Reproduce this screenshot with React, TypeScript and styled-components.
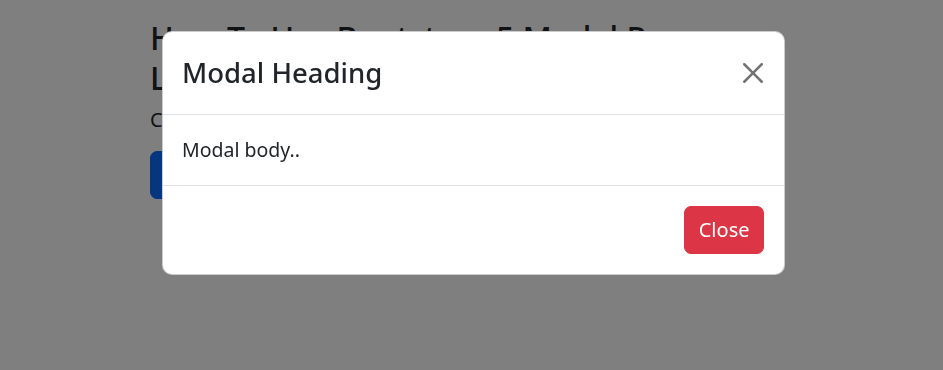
import React from 'react';
import styled, { createGlobalStyle } from 'styled-components';

const GlobalStyle = createGlobalStyle`
  html, body {
    margin: 0;
    padding: 0;
    background: #ffffff;
    overflow: hidden;
  }
  body {
    font-family: 'Noto Sans', 'Open Sans', Arial, sans-serif;
    color: #212529;
    font-size: 20px;
    line-height: 1.5;
  }
`;

const Page = styled.div`
  width: 643px;
  margin: 0 auto;
  padding-top: 18px;
`;

const Title = styled.h1`
  margin: 0 0 7px;
  font-size: 32px;
  font-weight: 500;
  line-height: 40px;
`;

const Lead = styled.p`
  margin: 0 0 16px;
`;

const Button = styled.button<{ $variant: 'primary' | 'danger' }>`
  font-family: inherit;
  font-size: 20px;
  line-height: 30px;
  padding: 8px 13.5px;
  border-radius: 7px;
  border: 1px solid ${(p) => (p.$variant === 'primary' ? '#0d6efd' : '#dc3545')};
  background: ${(p) => (p.$variant === 'primary' ? '#0d6efd' : '#dc3545')};
  color: #ffffff;
  cursor: pointer;
`;

const Backdrop = styled.div`
  position: fixed;
  inset: 0;
  background: rgba(0, 0, 0, 0.5);
`;

const ModalWrap = styled.div`
  position: fixed;
  inset: 0;
  display: flex;
  align-items: flex-start;
`;

const Dialog = styled.div`
  margin: 31px 0 0 162px;
  width: 623px;
  background: #ffffff;
  border: 1px solid rgba(0, 0, 0, 0.2);
  border-radius: 10px;
  box-sizing: border-box;
  display: flex;
  flex-direction: column;
`;

const Header = styled.div`
  display: flex;
  align-items: center;
  justify-content: space-between;
  padding: 18px 20px 19px 19px;
  border-bottom: 1px solid #dee2e6;
`;

const ModalTitle = styled.h4`
  margin: 0;
  font-size: 27.5px;
  font-weight: 500;
  line-height: 45px;
`;

const CloseX = styled.button`
  width: 20px;
  height: 20px;
  margin-right: 1px;
  padding: 0;
  border: 0;
  background: transparent;
  opacity: 0.55;
  display: flex;
  cursor: pointer;
`;

const Body = styled.div`
  padding: 20px 19px;
  font-size: 19.5px;
  line-height: 30px;
`;

const Footer = styled.div`
  display: flex;
  justify-content: flex-end;
  padding: 20px 20px;
  border-top: 1px solid #dee2e6;
`;

export default function App() {
  return (
    <>
      <GlobalStyle />
      <Page>
        <Title>How To Use Bootstrap 5 Modal Popup Login Form</Title>
        <Lead>Click on the button to open the modal.</Lead>
        <Button $variant="primary">Open modal</Button>
      </Page>
      <Backdrop />
      <ModalWrap>
        <Dialog>
          <Header>
            <ModalTitle>Modal Heading</ModalTitle>
            <CloseX aria-label="Close">
              <svg viewBox="0 0 16 16" width="20" height="20">
                <path
                  fill="#000"
                  d="M.293.293a1 1 0 0 1 1.414 0L8 6.586 14.293.293a1 1 0 1 1 1.414 1.414L9.414 8l6.293 6.293a1 1 0 0 1-1.414 1.414L8 9.414l-6.293 6.293a1 1 0 0 1-1.414-1.414L6.586 8 .293 1.707a1 1 0 0 1 0-1.414z"
                />
              </svg>
            </CloseX>
          </Header>
          <Body>Modal body..</Body>
          <Footer>
            <Button $variant="danger">Close</Button>
          </Footer>
        </Dialog>
      </ModalWrap>
    </>
  );
}
